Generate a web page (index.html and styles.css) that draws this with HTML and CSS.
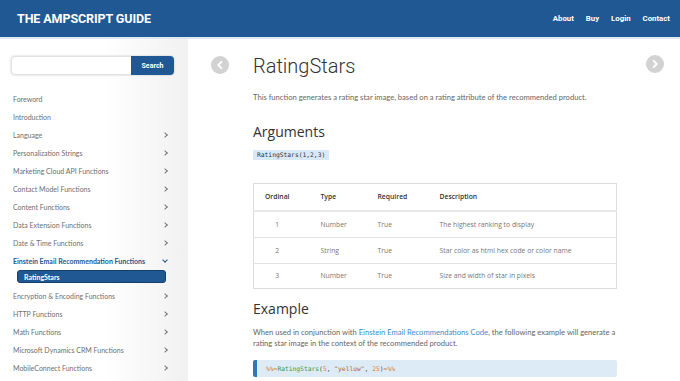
FILE: index.html
```html
<!DOCTYPE html>
<html lang="en">
<head>
    <meta charset="UTF-8">
    <title>RatingStars - The AMPscript Guide</title>
    <link rel="stylesheet" href="styles.css">
</head>
<body>
    <header class="topbar">
        <a class="brand" href="#">THE AMPSCRIPT GUIDE</a>
        <nav class="topnav">
            <a href="#">About</a>
            <a href="#">Buy</a>
            <a href="#">Login</a>
            <a href="#">Contact</a>
        </nav>
    </header>

    <div class="layout">
        <aside class="sidebar">
            <form class="search">
                <input type="text" class="search-input">
                <button type="button" class="search-btn">Search</button>
            </form>
            <ul class="toc">
                <li><a href="#">Foreword</a></li>
                <li><a href="#">Introduction</a></li>
                <li class="has-sub"><a href="#">Language</a></li>
                <li class="has-sub"><a href="#">Personalization Strings</a></li>
                <li class="has-sub"><a href="#">Marketing Cloud API Functions</a></li>
                <li class="has-sub"><a href="#">Contact Model Functions</a></li>
                <li class="has-sub"><a href="#">Content Functions</a></li>
                <li class="has-sub"><a href="#">Data Extension Functions</a></li>
                <li class="has-sub"><a href="#">Date &amp; Time Functions</a></li>
                <li class="has-sub open"><a href="#">Einstein Email Recommendation Functions</a></li>
                <li class="sub">
                    <a class="current" href="#">RatingStars</a>
                </li>
                <li class="has-sub"><a href="#">Encryption &amp; Encoding Functions</a></li>
                <li class="has-sub"><a href="#">HTTP Functions</a></li>
                <li class="has-sub"><a href="#">Math Functions</a></li>
                <li class="has-sub"><a href="#">Microsoft Dynamics CRM Functions</a></li>
                <li class="has-sub"><a href="#">MobileConnect Functions</a></li>
            </ul>
        </aside>

        <main class="main">
            <a class="pager prev" href="#">
                <svg viewBox="0 0 18 18" width="18" height="18"><circle cx="9" cy="9" r="9" fill="#d2d2d2"/><path d="M10.4 5.8 7.2 9l3.2 3.2" fill="none" stroke="#fff" stroke-width="1.9" stroke-linecap="round" stroke-linejoin="round"/></svg>
            </a>

            <article class="article">
                <h1>RatingStars</h1>
                <p>This function generates a rating star image, based on a rating attribute of the recommended product.</p>

                <h2 class="args-title">Arguments</h2>
                <code class="inline-code">RatingStars(1,2,3)</code>

                <table class="args">
                    <thead>
                        <tr>
                            <th class="col-ord">Ordinal</th>
                            <th class="col-type">Type</th>
                            <th class="col-req">Required</th>
                            <th>Description</th>
                        </tr>
                    </thead>
                    <tbody>
                        <tr>
                            <td class="col-ord">1</td>
                            <td>Number</td>
                            <td>True</td>
                            <td>The highest ranking to display</td>
                        </tr>
                        <tr>
                            <td class="col-ord">2</td>
                            <td>String</td>
                            <td>True</td>
                            <td>Star color as html hex code or color name</td>
                        </tr>
                        <tr>
                            <td class="col-ord">3</td>
                            <td>Number</td>
                            <td>True</td>
                            <td>Size and width of star in pixels</td>
                        </tr>
                    </tbody>
                </table>

                <h2 class="example-title">Example</h2>
                <p class="example-text">When used in conjunction with <a href="#">Einstein Email Recommendations Code</a>, the following example will generate a rating star image in the context of the recommended product.</p>

                <pre class="code-block"><span class="tk-delim">%%=</span><span class="tk-fn">RatingStars</span>(<span class="tk-num">5</span>, <span class="tk-str">"yellow"</span>, <span class="tk-num">25</span>)<span class="tk-delim">=%%</span></pre>
            </article>

            <a class="pager next" href="#">
                <svg viewBox="0 0 18 18" width="18" height="18"><circle cx="9" cy="9" r="9" fill="#d2d2d2"/><path d="M7.6 5.8 10.8 9l-3.2 3.2" fill="none" stroke="#fff" stroke-width="1.9" stroke-linecap="round" stroke-linejoin="round"/></svg>
            </a>
        </main>
    </div>
</body>
</html>
```

FILE: styles.css
```css
body {
    margin: 0;
    background: #fff;
    font-family: Lato, "Open Sans", sans-serif;
    color: #666;
    height: 100vh;
    overflow: hidden;
}

a {
    text-decoration: none;
}

/* top bar */

.topbar {
    height: 37px;
    background: #1f5893;
    border-bottom: 2px solid #dfe8f1;
    display: flex;
    align-items: center;
    justify-content: space-between;
    padding: 0 10px 0 17px;
}

.brand {
    color: #fff;
    font-family: Roboto, sans-serif;
    font-weight: 700;
    font-size: 12.5px;
    letter-spacing: -0.1px;
}

.topnav {
    display: flex;
    gap: 12px;
}

.topnav a {
    color: #fff;
    font-family: Roboto, sans-serif;
    font-weight: 700;
    font-size: 7.8px;
}

/* sidebar */

.layout {
    display: flex;
    height: calc(100vh - 39px);
}

.sidebar {
    width: 188px;
    flex-shrink: 0;
    background: linear-gradient(to right, #fff 0%, #fff 55%, #f1f1f1 100%);
    padding: 17px 0 0 0;
    box-sizing: border-box;
}

.search {
    display: flex;
    margin: 0 14px 0 11px;
    height: 19px;
    border-radius: 4px;
    box-shadow: 0 0 2px rgba(0, 0, 0, 0.25);
}

.search-input {
    flex: 1;
    min-width: 0;
    border: 1px solid #e2e2e2;
    border-right: none;
    border-radius: 4px 0 0 4px;
    background: #fff;
    padding: 0 6px;
    box-sizing: border-box;
}

.search-btn {
    width: 43px;
    border: none;
    border-radius: 0 4px 4px 0;
    background: #1f5893;
    color: #fff;
    font-family: Roboto, sans-serif;
    font-weight: 700;
    font-size: 7px;
    padding: 0;
}

.toc {
    list-style: none;
    margin: 15px 0 0 0;
    padding: 0;
}

.toc li a {
    display: flex;
    align-items: center;
    justify-content: space-between;
    height: 18px;
    padding: 0 20px 0 13px;
    font-size: 7px;
    color: #6e6e6e;
}

.toc li.has-sub > a::after {
    content: "";
    width: 3px;
    height: 3px;
    border-right: 1.2px solid #777;
    border-top: 1.2px solid #777;
    transform: rotate(45deg);
    margin-right: 1px;
}

.toc li.open > a {
    color: #1f5893;
    font-weight: 700;
}

.toc li.open > a::after {
    border-color: #1f5893;
    transform: rotate(135deg);
    margin-top: -2px;
}

.toc li.sub {
    padding: 0 22px 4px 17px;
}

.toc li.sub a.current {
    height: 13px;
    padding: 0 6px;
    background: #1f5893;
    border: 1px solid #173f6b;
    border-radius: 3px;
    color: #fff;
    font-weight: 700;
    box-sizing: border-box;
}

/* main */

.main {
    flex: 1;
    display: flex;
    align-items: flex-start;
    padding-top: 15px;
}

.pager {
    display: block;
    width: 18px;
    height: 18px;
}

.pager svg {
    display: block;
}

.prev {
    margin: 2px 24px 0 23px;
}

.next {
    margin: 1px 0 0 29px;
}

.article {
    width: 364px;
}

.article h1 {
    margin: 0;
    font-family: Roboto, sans-serif;
    font-weight: 300;
    font-size: 20px;
    line-height: 24px;
    color: #333;
}

.article p {
    margin: 14px 0 0;
    font-size: 7.6px;
    line-height: 11.5px;
    color: #666;
}

.article p a {
    color: #3a8cc9;
}

.article h2 {
    margin: 0;
    font-family: "Open Sans", sans-serif;
    font-weight: 400;
    font-size: 14px;
    line-height: 19px;
    color: #333;
}

.args-title {
    padding-top: 18px;
}

.inline-code {
    display: inline-block;
    margin-top: 9px;
    padding: 0 4px;
    height: 10px;
    line-height: 10px;
    background: #d8eaf8;
    font-family: "DejaVu Sans Mono", monospace;
    font-size: 6.3px;
    color: #333;
    border-radius: 1px;
}

.args {
    width: 100%;
    margin-top: 23px;
    border-collapse: collapse;
    table-layout: fixed;
    border: 1px solid #dcdcdc;
    font-family: "Open Sans", sans-serif;
    font-size: 6.8px;
}

.args th {
    height: 26px;
    text-align: left;
    padding: 0 0 0 20px;
    font-weight: 600;
    color: #333;
    border-bottom: 2px solid #e8e8e8;
}

.args td {
    height: 25px;
    padding: 0 0 0 20px;
    color: #777;
    border-bottom: 1px solid #e4e4e4;
}

.args tr:last-child td {
    border-bottom: none;
    height: 24px;
}

.args .col-ord {
    width: 47px;
    padding: 0;
    text-align: center;
    box-sizing: border-box;
}

.args .col-type {
    width: 57px;
    box-sizing: border-box;
}

.args .col-req {
    width: 62px;
    box-sizing: border-box;
}

.example-title {
    padding-top: 10px;
}

.article p.example-text {
    margin-top: 9px;
}

.code-block {
    margin: 10px 0 0;
    height: 17px;
    line-height: 17px;
    padding: 0 0 0 9px;
    background: #dcebf6;
    border-left: 4px solid #2b78bd;
    border-radius: 2px;
    font-family: "DejaVu Sans Mono", monospace;
    font-size: 6.3px;
    color: #555;
}

.tk-delim { color: #d9823b; }
.tk-fn { color: #3a9a48; }
.tk-num { color: #d9823b; }
.tk-str { color: #b06a2c; }
```
